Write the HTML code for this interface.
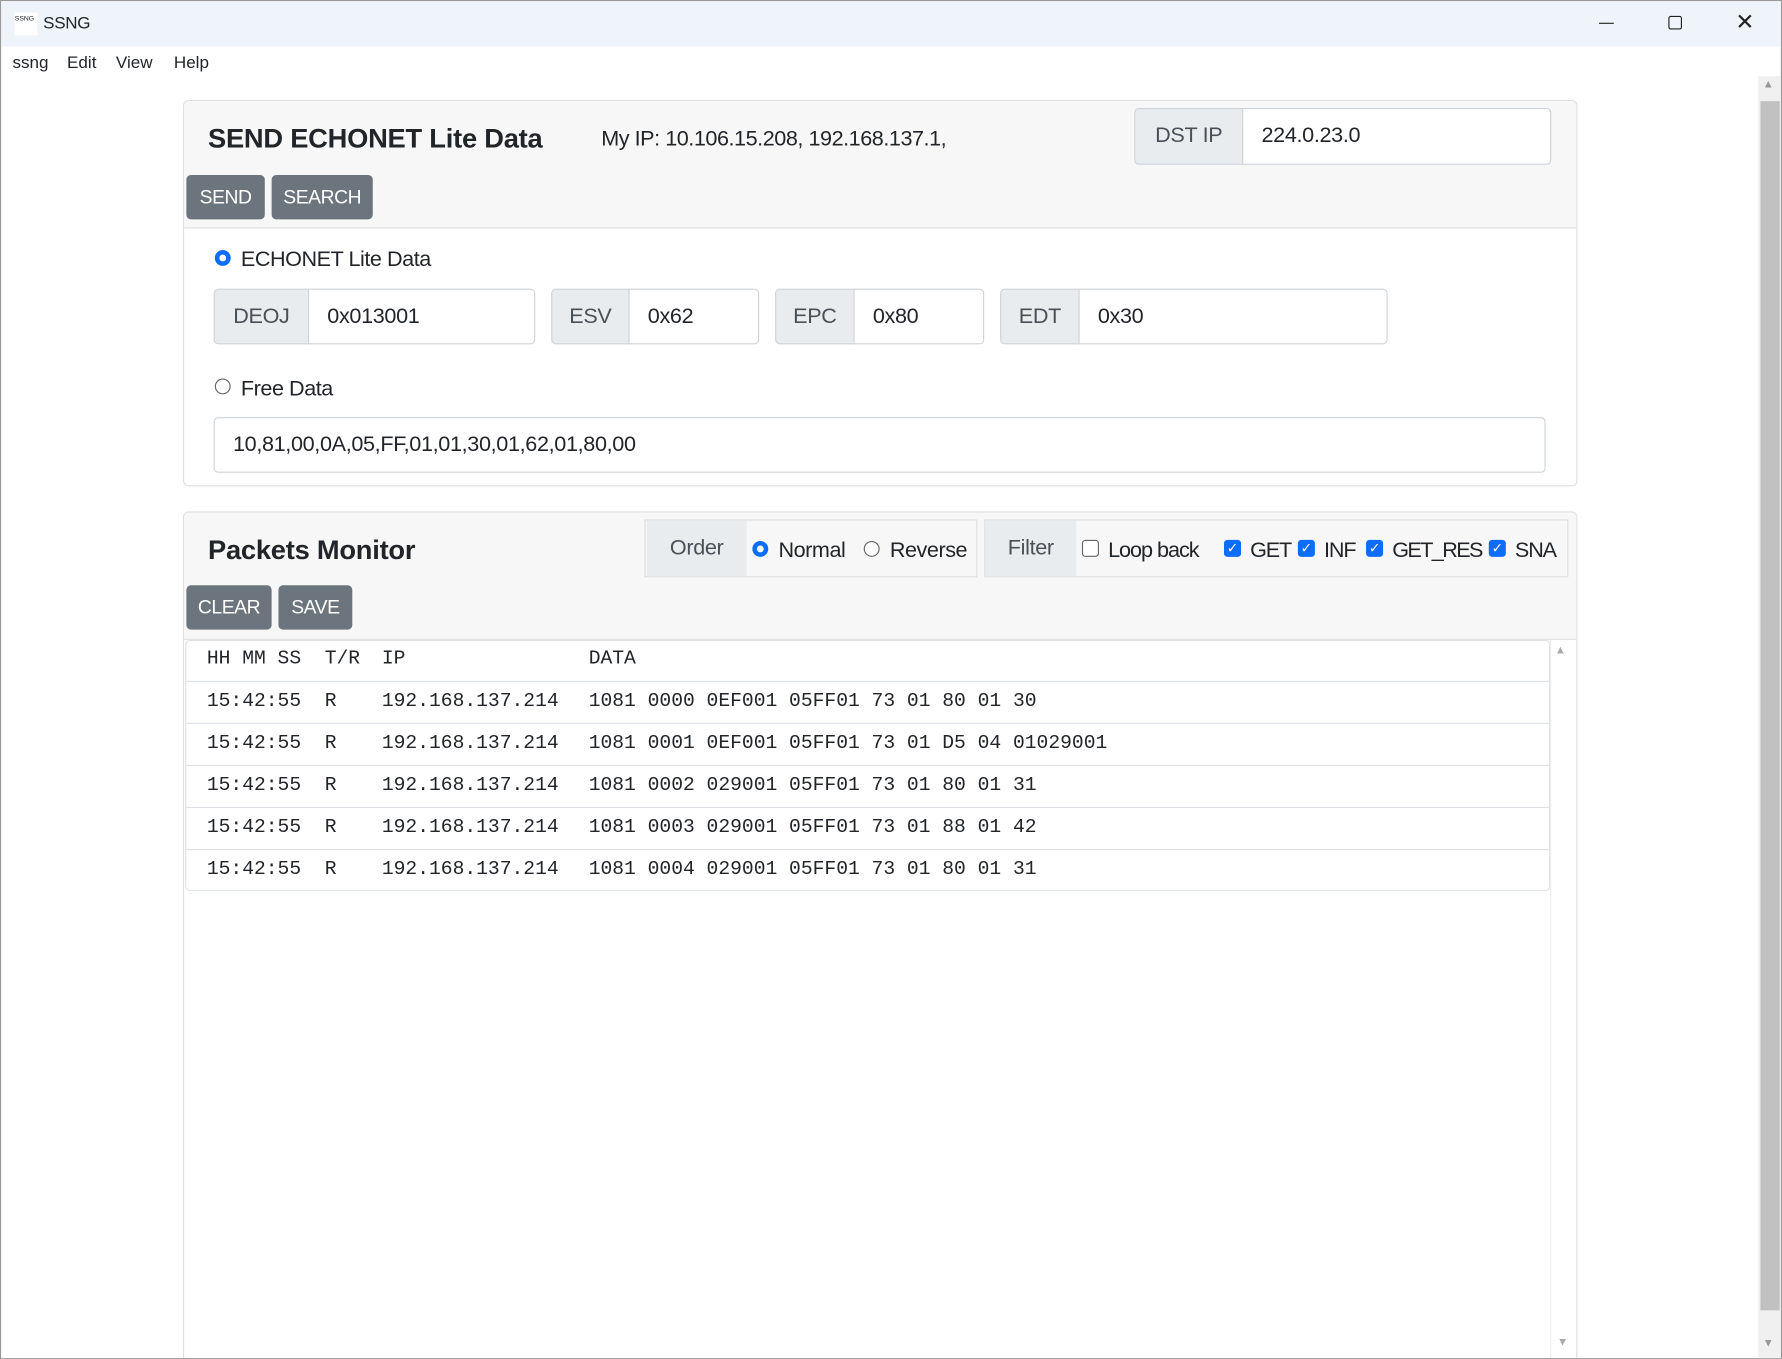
<!DOCTYPE html>
<html><head><meta charset="utf-8"><style>
html,body{margin:0;padding:0;width:1782px;height:1359px;overflow:hidden;background:#fff}
#w{position:absolute;left:0;top:0;width:1568px;height:1196px;transform:scale(1.13648);transform-origin:0 0;font-family:"Liberation Sans","DejaVu Sans",sans-serif;color:#212529;background:#fff;border:1px solid #9a9a9a;box-sizing:border-box;overflow:hidden}
.a{position:absolute}
.tb{left:0;top:0;width:1568px;height:40px;background:#eef4f9}
.lbl{background:#e9ecef;color:#495057;border:1px solid #ced4da;box-sizing:border-box;display:flex;align-items:center;justify-content:center;font-size:19px;letter-spacing:-0.3px}
.inp{background:#fff;border:1px solid #ced4da;box-sizing:border-box;display:flex;align-items:center;font-size:19px;padding-left:16px;letter-spacing:-0.3px}
.btn{background:#6c757d;color:#fff;font-size:17px;border-radius:4px;display:flex;align-items:center;justify-content:center;letter-spacing:-0.4px}
.rad{width:14px;height:14px;border-radius:50%;border:1px solid #666;box-sizing:border-box;background:#fff}
.rad.on{border:4px solid #0d6efd}
.cb{width:15px;height:15px;border-radius:3px;background:#0d6efd;color:#fff;font-size:12px;line-height:15px;text-align:center}
.cb.off{background:#fff;border:1px solid #666;box-sizing:border-box}
.t{font-size:19px;white-space:nowrap;letter-spacing:-0.4px}
.mono{font-family:"Liberation Mono","DejaVu Sans Mono",monospace;font-size:17.3px;white-space:pre}
.row{left:162px;width:1201px;height:37px;border-top:1px solid #dee2e6;box-sizing:border-box}
</style></head><body><div id="w">
<div class="a tb"></div>
<div class="a" style="left:12px;top:10px;width:20px;height:20px;background:#fff;font-size:6px;line-height:12px">SSNG</div>
<div class="a" style="left:37px;top:11px;font-size:15px;letter-spacing:-0.3px">SSNG</div>
<div class="a" style="left:1406px;top:19px;width:13px;height:1px;background:#222"></div>
<div class="a" style="left:1467px;top:13px;width:12px;height:12px;border:1.3px solid #222;border-radius:2px;box-sizing:border-box"></div>
<div class="a" style="left:1526px;top:6px;font-size:20px;color:#222">✕</div>
<div class="a" style="left:10px;top:46px;font-size:15px">ssng</div>
<div class="a" style="left:58px;top:46px;font-size:15px">Edit</div>
<div class="a" style="left:101px;top:46px;font-size:15px">View</div>
<div class="a" style="left:152px;top:46px;font-size:15px">Help</div>
<!-- scrollbar -->
<div class="a" style="left:1546px;top:66px;width:20px;height:1130px;background:#f0f0f0"></div>
<div class="a" style="left:1548px;top:88px;width:17px;height:1064px;background:#c1c1c1"></div>
<div class="a" style="left:1550px;top:68px;font-size:10px;color:#999">▲</div>
<div class="a" style="left:1550px;top:1176px;font-size:10px;color:#999">▼</div>
<!-- panel 1 -->
<div class="a" style="left:160px;top:87px;width:1227px;height:340px;border:1px solid #dfdfdf;border-radius:5px;box-sizing:border-box;overflow:hidden">
<div style="height:111px;background:#f7f7f7;border-bottom:1px solid #dfdfdf"></div></div>
<div class="a" style="left:182px;top:108px;font-size:24px;font-weight:bold;color:#212529;letter-spacing:-0.2px">SEND ECHONET Lite Data</div>
<div class="a t" style="left:528px;top:111px">My IP: 10.106.15.208, 192.168.137.1,</div>
<div class="a lbl" style="left:997px;top:94px;width:96px;height:50px;border-radius:4px 0 0 4px">DST IP</div>
<div class="a inp" style="left:1092px;top:94px;width:272px;height:50px;border-radius:0 4px 4px 0">224.0.23.0</div>
<div class="a btn" style="left:163px;top:153px;width:69px;height:39px">SEND</div>
<div class="a btn" style="left:238px;top:153px;width:89px;height:39px">SEARCH</div>
<div class="a rad on" style="left:188px;top:219px"></div>
<div class="a t" style="left:211px;top:217px">ECHONET Lite Data</div>
<div class="a lbl" style="left:187px;top:253px;width:84px;height:49px;border-radius:4px 0 0 4px">DEOJ</div>
<div class="a inp" style="left:270px;top:253px;width:200px;height:49px;border-radius:0 4px 4px 0">0x013001</div>
<div class="a lbl" style="left:484px;top:253px;width:69px;height:49px;border-radius:4px 0 0 4px">ESV</div>
<div class="a inp" style="left:552px;top:253px;width:115px;height:49px;border-radius:0 4px 4px 0">0x62</div>
<div class="a lbl" style="left:681px;top:253px;width:70px;height:49px;border-radius:4px 0 0 4px">EPC</div>
<div class="a inp" style="left:750px;top:253px;width:115px;height:49px;border-radius:0 4px 4px 0">0x80</div>
<div class="a lbl" style="left:879px;top:253px;width:70px;height:49px;border-radius:4px 0 0 4px">EDT</div>
<div class="a inp" style="left:948px;top:253px;width:272px;height:49px;border-radius:0 4px 4px 0">0x30</div>
<div class="a rad" style="left:188px;top:332px"></div>
<div class="a t" style="left:211px;top:331px">Free Data</div>
<div class="a inp" style="left:187px;top:366px;width:1172px;height:49px;border-radius:4px">10,81,00,0A,05,FF,01,01,30,01,62,01,80,00</div>
<!-- panel 2 -->
<div class="a" style="left:160px;top:449px;width:1227px;height:760px;border:1px solid #dfdfdf;border-radius:5px;box-sizing:border-box;overflow:hidden">
<div style="height:111px;background:#f7f7f7;border-bottom:1px solid #dfdfdf"></div></div>
<div class="a" style="left:182px;top:470px;font-size:24px;font-weight:bold;letter-spacing:-0.2px">Packets Monitor</div>
<div class="a" style="left:566px;top:456px;width:293px;height:51px;border:1px solid #dfdfdf;box-sizing:border-box"></div>
<div class="a lbl" style="left:568px;top:457px;width:88px;height:49px;border:none">Order</div>
<div class="a rad on" style="left:661px;top:475px"></div>
<div class="a t" style="left:684px;top:473px">Normal</div>
<div class="a rad" style="left:759px;top:475px"></div>
<div class="a t" style="left:782px;top:473px">Reverse</div>
<div class="a" style="left:865px;top:456px;width:514px;height:51px;border:1px solid #dfdfdf;box-sizing:border-box"></div>
<div class="a lbl" style="left:866px;top:457px;width:80px;height:49px;border:none">Filter</div>
<div class="a cb off" style="left:951px;top:474px"></div>
<div class="a t" style="left:974px;top:473px;letter-spacing:-0.9px">Loop back</div>
<div class="a cb" style="left:1076px;top:474px">✓</div>
<div class="a t" style="left:1099px;top:473px;letter-spacing:-1px">GET</div>
<div class="a cb" style="left:1141px;top:474px">✓</div>
<div class="a t" style="left:1164px;top:473px;letter-spacing:-1px">INF</div>
<div class="a cb" style="left:1201px;top:474px">✓</div>
<div class="a t" style="left:1224px;top:473px;letter-spacing:-1.4px">GET_RES</div>
<div class="a cb" style="left:1309px;top:474px">✓</div>
<div class="a t" style="left:1332px;top:473px;letter-spacing:-1px">SNA</div>
<div class="a btn" style="left:163px;top:514px;width:75px;height:39px">CLEAR</div>
<div class="a btn" style="left:244px;top:514px;width:65px;height:39px">SAVE</div>
<div class="a" style="left:162px;top:562px;width:1201px;height:221px;border:1px solid #dee2e6;border-radius:4px;box-sizing:border-box"></div>
<div class="a" style="left:1367px;top:566px;font-size:10px;color:#aaa">▲</div>
<div class="a mono" style="left:181px;top:570px">HH MM SS  T/R</div><div class="a mono" style="left:335px;top:570px">IP</div><div class="a mono" style="left:517px;top:570px">DATA</div>
<div class="a row" style="top:598px"></div><div class="a mono" style="left:181px;top:607px">15:42:55  R</div><div class="a mono" style="left:335px;top:607px">192.168.137.214</div><div class="a mono" style="left:517px;top:607px">1081 0000 0EF001 05FF01 73 01 80 01 30</div>
<div class="a row" style="top:635px"></div><div class="a mono" style="left:181px;top:644px">15:42:55  R</div><div class="a mono" style="left:335px;top:644px">192.168.137.214</div><div class="a mono" style="left:517px;top:644px">1081 0001 0EF001 05FF01 73 01 D5 04 01029001</div>
<div class="a row" style="top:672px"></div><div class="a mono" style="left:181px;top:681px">15:42:55  R</div><div class="a mono" style="left:335px;top:681px">192.168.137.214</div><div class="a mono" style="left:517px;top:681px">1081 0002 029001 05FF01 73 01 80 01 31</div>
<div class="a row" style="top:709px"></div><div class="a mono" style="left:181px;top:718px">15:42:55  R</div><div class="a mono" style="left:335px;top:718px">192.168.137.214</div><div class="a mono" style="left:517px;top:718px">1081 0003 029001 05FF01 73 01 88 01 42</div>
<div class="a row" style="top:746px"></div><div class="a mono" style="left:181px;top:755px">15:42:55  R</div><div class="a mono" style="left:335px;top:755px">192.168.137.214</div><div class="a mono" style="left:517px;top:755px">1081 0004 029001 05FF01 73 01 80 01 31</div>
<div class="a" style="left:1363px;top:562px;width:22px;height:640px;border-left:1px solid #eee"></div>
<div class="a" style="left:1369px;top:1175px;font-size:10px;color:#aaa">▼</div>
</div></body></html>
